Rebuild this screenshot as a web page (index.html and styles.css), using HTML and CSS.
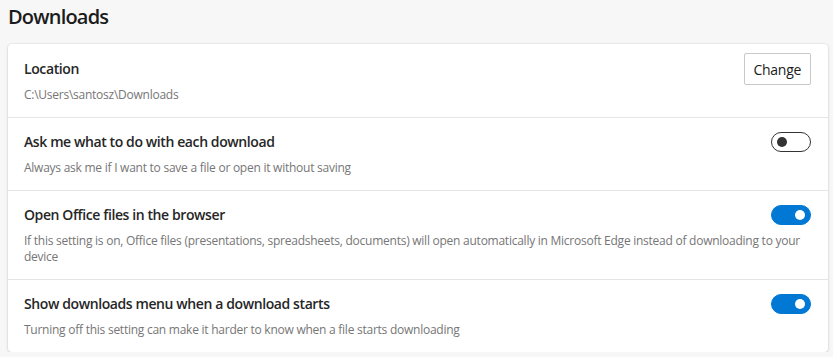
FILE: index.html
```html
<!DOCTYPE html>
<html lang="en">
<head>
  <meta charset="UTF-8" />
  <title>Downloads</title>
  <link rel="stylesheet" href="styles.css">
</head>
<body>
  <h1 class="page-title">Downloads</h1>

  <div class="card">
    <div class="row">
      <div class="head">
        <div class="label">Location</div>
        <button class="btn">Change</button>
      </div>
      <div class="desc">C:\Users\santosz\Downloads</div>
    </div>

    <div class="row">
      <div class="head">
        <div class="label">Ask me what to do with each download</div>
        <span class="toggle"></span>
      </div>
      <div class="desc">Always ask me if I want to save a file or open it without saving</div>
    </div>

    <div class="row">
      <div class="head">
        <div class="label">Open Office files in the browser</div>
        <span class="toggle on"></span>
      </div>
      <div class="desc">If this setting is on, Office files (presentations, spreadsheets, documents) will open automatically in Microsoft Edge instead of downloading to your device</div>
    </div>

    <div class="row">
      <div class="head">
        <div class="label">Show downloads menu when a download starts</div>
        <span class="toggle on"></span>
      </div>
      <div class="desc">Turning off this setting can make it harder to know when a file starts downloading</div>
    </div>
  </div>
</body>
</html>
```

FILE: styles.css
```css
* { margin: 0; padding: 0; box-sizing: border-box; }
body {
  font-family: 'Open Sans', 'Noto Sans', sans-serif;
  background: #f7f7f7;
  color: #1b1b1b;
  padding: 3px 5px 0 8px;
}
.page-title {
  font-size: 20px;
  font-weight: 600;
  line-height: 28px;
  letter-spacing: -0.8px;
  margin-bottom: 13px;
}
.card {
  background: #fff;
  border-radius: 4px;
  box-shadow: 0 0 2px rgba(0,0,0,0.14), 0 1px 3px rgba(0,0,0,0.12);
}
.row {
  padding: 14px 17px 14px 16px;
  border-top: 1px solid #e5e5e5;
}
.row:first-child { border-top: none; padding-top: 15px; }
.head {
  display: flex;
  align-items: center;
  justify-content: space-between;
  gap: 24px;
}
.label {
  font-size: 14px;
  font-weight: 600;
  line-height: 20px;
  letter-spacing: -0.4px;
  color: #262626;
}
.desc {
  font-size: 12px;
  line-height: 16px;
  letter-spacing: -0.25px;
  color: #767676;
  margin-top: 8px;
}
.btn {
  font-family: inherit;
  font-size: 14px;
  letter-spacing: -0.3px;
  color: #1b1b1b;
  background: #fff;
  border: 1px solid #c8c8c8;
  border-radius: 2px;
  height: 32px;
  padding: 0 9px;
  margin: -6px 0;
  flex: none;
}
.toggle {
  flex: none;
  position: relative;
  width: 40px;
  height: 20px;
  border: 1px solid #333;
  border-radius: 10px;
  background: #fff;
}
.toggle::after {
  content: "";
  position: absolute;
  top: 4px; left: 5px;
  width: 10px; height: 10px;
  border-radius: 50%;
  background: #333;
}
.toggle.on {
  background: #0078d4;
  border-color: #0078d4;
}
.toggle.on::after {
  left: auto; right: 5px;
  background: #fff;
}
```
